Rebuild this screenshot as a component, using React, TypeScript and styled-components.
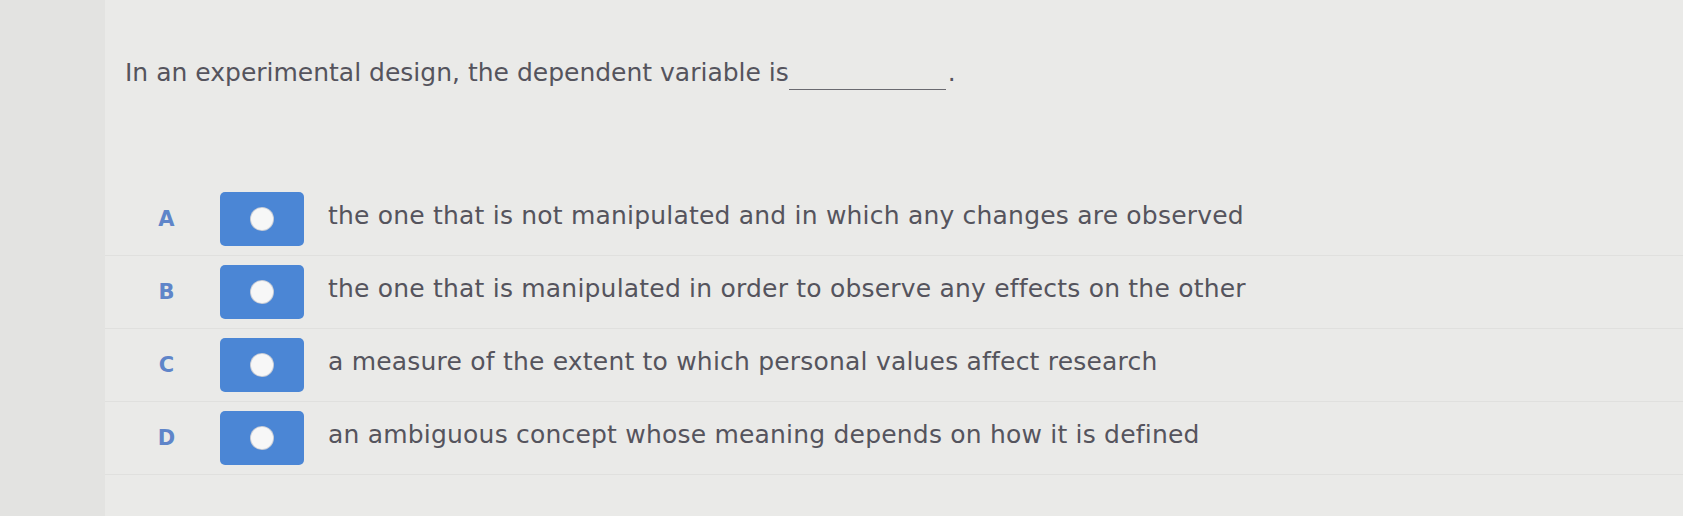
import styled, { createGlobalStyle } from 'styled-components';

const GlobalStyle = createGlobalStyle`
  html, body {
    margin: 0;
    padding: 0;
    background: #e4e4e2;
  }
  body {
    font-family: 'DejaVu Sans', Verdana, sans-serif;
  }
`;

const options = [
  { key: 'A', text: 'the one that is not manipulated and in which any changes are observed' },
  { key: 'B', text: 'the one that is manipulated in order to observe any effects on the other' },
  { key: 'C', text: 'a measure of the extent to which personal values affect research' },
  { key: 'D', text: 'an ambiguous concept whose meaning depends on how it is defined' },
];

export default function App() {
  return (
    <>
      <GlobalStyle />
      <Page>
        <Panel>
          <Question>
            In an experimental design, the dependent variable is
            <Blank />.
          </Question>
          <OptionList>
            {options.map((o) => (
              <OptionRow key={o.key}>
                <Letter>{o.key}</Letter>
                <RadioButton type="button" aria-label={`Option ${o.key}`}>
                  <Dot />
                </RadioButton>
                <OptionText>{o.text}</OptionText>
              </OptionRow>
            ))}
          </OptionList>
        </Panel>
      </Page>
    </>
  );
}

const Page = styled.div`
  width: 1683px;
  height: 516px;
  display: flex;
  background: #e3e3e1;
  overflow: hidden;
`;

const Panel = styled.div`
  flex: 1;
  margin-left: 105px;
  background: #eaeae8;
  display: flex;
  flex-direction: column;
`;

const Question = styled.div`
  padding: 56px 0 0 20px;
  font-size: 25px;
  line-height: 34px;
  color: #55545d;
  display: flex;
  align-items: flex-end;
`;

const Blank = styled.span`
  display: inline-block;
  width: 157px;
  height: 27px;
  border-bottom: 1.5px solid #6a6a70;
  margin-right: 2px;
`;

const OptionList = styled.div`
  margin-top: 93px;
  display: flex;
  flex-direction: column;
`;

const OptionRow = styled.div`
  display: grid;
  grid-template-columns: 115px 84px 1fr;
  align-items: center;
  padding: 9px 0;
  border-bottom: 1px solid #e0e0de;
`;

const Letter = styled.span`
  padding-left: 8px;
  text-align: center;
  font-weight: bold;
  font-size: 21px;
  color: #5f85c9;
`;

const RadioButton = styled.button`
  width: 84px;
  height: 54px;
  border: none;
  border-radius: 5px;
  background: #4b86d5;
  display: flex;
  align-items: center;
  justify-content: center;
  padding: 0;
`;

const Dot = styled.span`
  width: 22px;
  height: 22px;
  border-radius: 50%;
  background: #f7f7f7;
  box-shadow: 0 0 0 1px #c9cdd6;
`;

const OptionText = styled.span`
  padding-left: 24px;
  padding-bottom: 8px;
  font-size: 25px;
  letter-spacing: 0.2px;
  color: #55545d;
`;
